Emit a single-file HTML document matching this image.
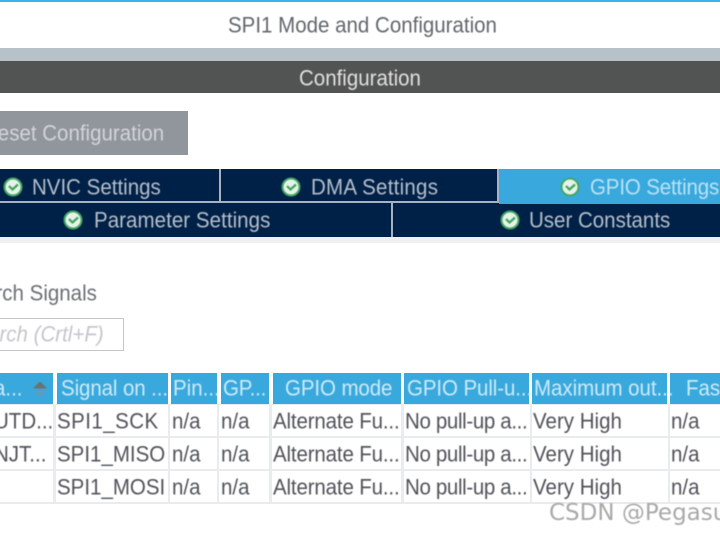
<!DOCTYPE html>
<html><head><meta charset="utf-8">
<style>
html,body{margin:0;padding:0;background:#fff}
#p{position:relative;width:720px;height:540px;overflow:hidden;background:#fff;font-family:"Liberation Sans",sans-serif}
#p div,#p svg{position:absolute}
.t{white-space:nowrap;font-size:20.5px;line-height:24px;filter:blur(.5px);transform:scaleY(1.08)}
.h{background:#39a9dd;top:373px;height:31px}
.ht{color:#cdeaf8;top:377px}
.c{background:#fff;height:31px}
.d{color:#50535a}
</style></head><body><div id="p">
<div style="left:0;top:0;width:720px;height:1.5px;background:#3cb0e8"></div>
<div class="t" style="left:228px;top:14px;color:#62666c">SPI1 Mode and Configuration</div>
<div style="left:0;top:48px;width:720px;height:13px;background:#b6c1c8"></div>
<div style="left:0;top:61px;width:720px;height:32px;background:#525453"></div>
<div class="t" style="left:299px;top:67px;color:#dfe0df">Configuration</div>

<div style="left:0;top:111px;width:188px;height:44px;background:#90969c"></div>
<div class="t" style="left:-17px;top:122px;color:#d2d5d8">Reset Configuration</div>

<div style="left:0;top:169px;width:720px;height:68px;background:#002147"></div>
<div style="left:0;top:201px;width:499px;height:2px;background:#a9b3bf"></div>
<div style="left:219px;top:169px;width:2px;height:33px;background:#a9b3bf"></div>
<div style="left:497px;top:169px;width:2px;height:33px;background:#a9b3bf"></div>
<div style="left:391px;top:202px;width:2px;height:35px;background:#a9b3bf"></div>
<div style="left:499px;top:169px;width:221px;height:35px;background:#39a9dd"></div>
<div style="left:0;top:237px;width:720px;height:6px;background:#eff0f2"></div>

<svg style="left:0;top:0;filter:blur(.4px)" width="720" height="240" viewBox="0 0 720 240">
<g fill="#e6f2ea" stroke="#43a862" stroke-width="2">
<circle cx="13" cy="187" r="8.500"/><circle cx="291" cy="187" r="8.500"/><circle cx="570" cy="187" r="8.500"/><circle cx="73" cy="220" r="8.500"/><circle cx="510" cy="220" r="8.500"/></g>
<g fill="none" stroke="#3fa35c" stroke-width="2.200">
<path d="M9 186l3.500 3.500 5.500-5"/><path d="M287 186l3.500 3.500 5.500-5"/><path d="M566 186l3.500 3.500 5.500-5"/><path d="M69 219l3.500 3.500 5.500-5"/><path d="M506 219l3.500 3.500 5.500-5"/></g>
</svg>

<div class="t" style="left:32px;top:176px;color:#b6bfcb">NVIC Settings</div>
<div class="t" style="left:311px;top:176px;color:#b6bfcb;letter-spacing:.25px">DMA Settings</div>
<div class="t" style="left:590px;top:176px;color:#b9e2f5;letter-spacing:-.15px">GPIO Settings</div>
<div class="t" style="left:94px;top:209px;color:#b6bfcb;letter-spacing:.05px">Parameter Settings</div>
<div class="t" style="left:529px;top:209px;color:#b6bfcb">User Constants</div>

<div class="t" style="left:-41px;top:282px;color:#6b6f75">Search Signals</div>
<div style="left:-10px;top:318px;width:132px;height:31px;border:1.500px solid #c3c7ca;background:#fff"></div>
<div class="t" style="left:-37px;top:323px;color:#c4c6c9;font-style:italic">Search (Crtl+F)</div>

<div style="left:0;top:404px;width:720px;height:100px;background:#e9ecef"></div>

<div class="h" style="left:0;width:53px"></div>
<div class="h" style="left:57px;width:111px"></div>
<div class="h" style="left:171px;width:46px"></div>
<div class="h" style="left:221px;width:48px"></div>
<div class="h" style="left:273px;width:128px"></div>
<div class="h" style="left:404px;width:125px"></div>
<div class="h" style="left:532px;width:135px"></div>
<div class="h" style="left:670px;width:50px"></div>
<svg style="left:0;top:370px;filter:blur(.4px)" width="60" height="40" viewBox="0 370 60 40">
<path d="M33 388.500l7-7 7 7z" fill="#6f6f6f"/><path d="M33 390.500l7 7 7-7z" fill="#5c9dc0"/></svg>

<div class="t ht" style="left:-6px">a...</div>
<div class="t ht" style="left:61px;letter-spacing:-.1px">Signal on ...</div>
<div class="t ht" style="left:173px">Pin...</div>
<div class="t ht" style="left:223px;letter-spacing:-.2px">GP...</div>
<div class="t ht" style="left:285px;letter-spacing:-.1px">GPIO mode</div>
<div class="t ht" style="left:407px;letter-spacing:-.1px">GPIO Pull-u...</div>
<div class="t ht" style="left:534px;letter-spacing:-.05px">Maximum out...</div>
<div class="t ht" style="left:686px">Fas</div>

<div class="c" style="left:0;top:405px;width:53px"></div><div class="c" style="left:0;top:438px;width:53px"></div><div class="c" style="left:0;top:471px;width:53px"></div>
<div class="c" style="left:56px;top:405px;width:112px"></div><div class="c" style="left:56px;top:438px;width:112px"></div><div class="c" style="left:56px;top:471px;width:112px"></div>
<div class="c" style="left:170px;top:405px;width:47px"></div><div class="c" style="left:170px;top:438px;width:47px"></div><div class="c" style="left:170px;top:471px;width:47px"></div>
<div class="c" style="left:219px;top:405px;width:50px"></div><div class="c" style="left:219px;top:438px;width:50px"></div><div class="c" style="left:219px;top:471px;width:50px"></div>
<div class="c" style="left:272px;top:405px;width:129px"></div><div class="c" style="left:272px;top:438px;width:129px"></div><div class="c" style="left:272px;top:471px;width:129px"></div>
<div class="c" style="left:404px;top:405px;width:126px"></div><div class="c" style="left:404px;top:438px;width:126px"></div><div class="c" style="left:404px;top:471px;width:126px"></div>
<div class="c" style="left:532px;top:405px;width:136px"></div><div class="c" style="left:532px;top:438px;width:136px"></div><div class="c" style="left:532px;top:471px;width:136px"></div>
<div class="c" style="left:670px;top:405px;width:50px"></div><div class="c" style="left:670px;top:438px;width:50px"></div><div class="c" style="left:670px;top:471px;width:50px"></div>

<div class="t d" style="left:-6px;top:410px">UTD...</div>
<div class="t d" style="left:-6px;top:443px">NJT...</div>
<div class="t d" style="left:57px;top:410px;letter-spacing:.45px">SPI1_SCK</div>
<div class="t d" style="left:57px;top:443px">SPI1_MISO</div>
<div class="t d" style="left:57px;top:476px">SPI1_MOSI</div>
<div class="t d" style="left:172px;top:410px">n/a</div>
<div class="t d" style="left:172px;top:443px">n/a</div>
<div class="t d" style="left:172px;top:476px">n/a</div>
<div class="t d" style="left:221px;top:410px">n/a</div>
<div class="t d" style="left:221px;top:443px">n/a</div>
<div class="t d" style="left:221px;top:476px">n/a</div>
<div class="t d" style="left:273px;top:410px;letter-spacing:-.15px">Alternate Fu...</div>
<div class="t d" style="left:273px;top:443px;letter-spacing:-.15px">Alternate Fu...</div>
<div class="t d" style="left:273px;top:476px;letter-spacing:-.15px">Alternate Fu...</div>
<div class="t d" style="left:405px;top:410px;letter-spacing:-.35px">No pull-up a...</div>
<div class="t d" style="left:405px;top:443px;letter-spacing:-.35px">No pull-up a...</div>
<div class="t d" style="left:405px;top:476px;letter-spacing:-.35px">No pull-up a...</div>
<div class="t d" style="left:533px;top:410px">Very High</div>
<div class="t d" style="left:533px;top:443px">Very High</div>
<div class="t d" style="left:533px;top:476px">Very High</div>
<div class="t d" style="left:671px;top:410px">n/a</div>
<div class="t d" style="left:671px;top:443px">n/a</div>
<div class="t d" style="left:671px;top:476px">n/a</div>

<div style="left:549px;top:499px;white-space:nowrap;font-family:'DejaVu Sans',sans-serif;font-size:23px;line-height:28px;color:#a9a9a9;filter:blur(.5px)">CSDN @Pegasus</div>
</div></body></html>
